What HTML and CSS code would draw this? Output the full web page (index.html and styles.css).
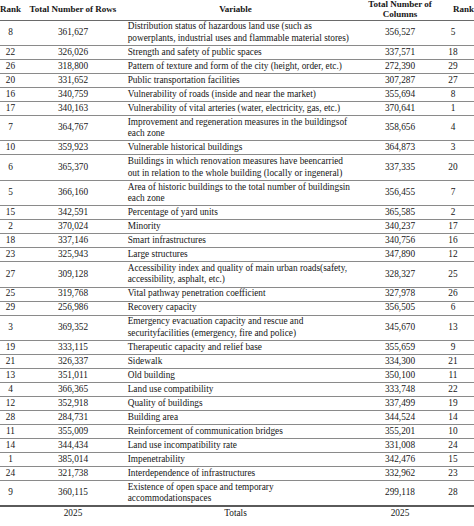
FILE: index.html
```html
<!DOCTYPE html>
<html>
<head>
<meta charset="utf-8">
<link rel="stylesheet" href="styles.css">
</head>
<body>
<table class="tbl">
  <colgroup>
    <col class="c-rank">
    <col class="c-rows">
    <col class="c-var">
    <col class="c-cols">
    <col class="c-rank2">
  </colgroup>
  <thead>
    <tr>
      <th class="num">Rank</th>
      <th class="num">Total Number of Rows</th>
      <th class="var-h">Variable</th>
      <th class="num">Total Number of<br>Columns</th>
      <th class="rank2-h">Rank</th>
    </tr>
  </thead>
  <tbody>
    <tr><td class="num">8</td><td class="num">361,627</td><td class="var">Distribution status of hazardous land use (such as<br>powerplants, industrial uses and flammable material stores)</td><td class="num">356,527</td><td class="rank2">5</td></tr>
    <tr><td class="num">22</td><td class="num">326,026</td><td class="var">Strength and safety of public spaces</td><td class="num">337,571</td><td class="rank2">18</td></tr>
    <tr><td class="num">26</td><td class="num">318,800</td><td class="var">Pattern of texture and form of the city (height, order, etc.)</td><td class="num">272,390</td><td class="rank2">29</td></tr>
    <tr><td class="num">20</td><td class="num">331,652</td><td class="var">Public transportation facilities</td><td class="num">307,287</td><td class="rank2">27</td></tr>
    <tr><td class="num">16</td><td class="num">340,759</td><td class="var">Vulnerability of roads (inside and near the market)</td><td class="num">355,694</td><td class="rank2">8</td></tr>
    <tr><td class="num">17</td><td class="num">340,163</td><td class="var">Vulnerability of vital arteries (water, electricity, gas, etc.)</td><td class="num">370,641</td><td class="rank2">1</td></tr>
    <tr><td class="num">7</td><td class="num">364,767</td><td class="var">Improvement and regeneration measures in the buildingsof<br>each zone</td><td class="num">358,656</td><td class="rank2">4</td></tr>
    <tr><td class="num">10</td><td class="num">359,923</td><td class="var">Vulnerable historical buildings</td><td class="num">364,873</td><td class="rank2">3</td></tr>
    <tr><td class="num">6</td><td class="num">365,370</td><td class="var">Buildings in which renovation measures have beencarried<br>out in relation to the whole building (locally or ingeneral)</td><td class="num">337,335</td><td class="rank2">20</td></tr>
    <tr><td class="num">5</td><td class="num">366,160</td><td class="var">Area of historic buildings to the total number of buildingsin<br>each zone</td><td class="num">356,455</td><td class="rank2">7</td></tr>
    <tr><td class="num">15</td><td class="num">342,591</td><td class="var">Percentage of yard units</td><td class="num">365,585</td><td class="rank2">2</td></tr>
    <tr><td class="num">2</td><td class="num">370,024</td><td class="var">Minority</td><td class="num">340,237</td><td class="rank2">17</td></tr>
    <tr><td class="num">18</td><td class="num">337,146</td><td class="var">Smart infrastructures</td><td class="num">340,756</td><td class="rank2">16</td></tr>
    <tr><td class="num">23</td><td class="num">325,943</td><td class="var">Large structures</td><td class="num">347,890</td><td class="rank2">12</td></tr>
    <tr><td class="num">27</td><td class="num">309,128</td><td class="var">Accessibility index and quality of main urban roads(safety,<br>accessibility, asphalt, etc.)</td><td class="num">328,327</td><td class="rank2">25</td></tr>
    <tr><td class="num">25</td><td class="num">319,768</td><td class="var">Vital pathway penetration coefficient</td><td class="num">327,978</td><td class="rank2">26</td></tr>
    <tr><td class="num">29</td><td class="num">256,986</td><td class="var">Recovery capacity</td><td class="num">356,505</td><td class="rank2">6</td></tr>
    <tr><td class="num">3</td><td class="num">369,352</td><td class="var">Emergency evacuation capacity and rescue and<br>securityfacilities (emergency, fire and police)</td><td class="num">345,670</td><td class="rank2">13</td></tr>
    <tr><td class="num">19</td><td class="num">333,115</td><td class="var">Therapeutic capacity and relief base</td><td class="num">355,659</td><td class="rank2">9</td></tr>
    <tr><td class="num">21</td><td class="num">326,337</td><td class="var">Sidewalk</td><td class="num">334,300</td><td class="rank2">21</td></tr>
    <tr><td class="num">13</td><td class="num">351,011</td><td class="var">Old building</td><td class="num">350,100</td><td class="rank2">11</td></tr>
    <tr><td class="num">4</td><td class="num">366,365</td><td class="var">Land use compatibility</td><td class="num">333,748</td><td class="rank2">22</td></tr>
    <tr><td class="num">12</td><td class="num">352,918</td><td class="var">Quality of buildings</td><td class="num">337,499</td><td class="rank2">19</td></tr>
    <tr><td class="num">28</td><td class="num">284,731</td><td class="var">Building area</td><td class="num">344,524</td><td class="rank2">14</td></tr>
    <tr><td class="num">11</td><td class="num">355,009</td><td class="var">Reinforcement of communication bridges</td><td class="num">355,201</td><td class="rank2">10</td></tr>
    <tr><td class="num">14</td><td class="num">344,434</td><td class="var">Land use incompatibility rate</td><td class="num">331,008</td><td class="rank2">24</td></tr>
    <tr><td class="num">1</td><td class="num">385,014</td><td class="var">Impenetrability</td><td class="num">342,476</td><td class="rank2">15</td></tr>
    <tr><td class="num">24</td><td class="num">321,738</td><td class="var">Interdependence of infrastructures</td><td class="num">332,962</td><td class="rank2">23</td></tr>
    <tr class="last"><td class="num">9</td><td class="num">360,115</td><td class="var">Existence of open space and temporary<br>accommodationspaces</td><td class="num">299,118</td><td class="rank2">28</td></tr>
  </tbody>
  <tfoot>
    <tr><td class="num"></td><td class="num">2025</td><td class="var-h">Totals</td><td class="num">2025</td><td class="rank2"></td></tr>
  </tfoot>
</table>
</body>
</html>
```

FILE: styles.css
```css
html, body {
  margin: 0;
  padding: 0;
  background: #ffffff;
  overflow: hidden;
}

.tbl {
  margin-top: -1.5px;
  margin-left: -3px;
  width: 477px;
  table-layout: fixed;
  border-collapse: separate;
  border-spacing: 0;
  font-family: "Liberation Serif", "Times New Roman", serif;
  font-size: 9.3px;
  color: #161616;
}

.c-rank { width: 27px; }
.c-rows { width: 98px; }
.c-var { width: 236px; }
.c-cols { width: 84px; }
.c-rank2 { width: 32px; }

.tbl th {
  font-weight: bold;
  font-size: 9px;
  line-height: 10px;
  padding: 0 0 1px 0;
  border-bottom: 1.5px solid #6a6a6a;
  vertical-align: middle;
  white-space: nowrap;
}

.tbl td {
  line-height: 11.4px;
  padding: 0.8px 0;
  border-bottom: 1.2px solid #8a8a8a;
  vertical-align: middle;
  white-space: nowrap;
}

.tbl .num { text-align: center; }

.tbl .var {
  text-align: left;
  padding-left: 5.7px;
}

.tbl .var-h {
  text-align: center;
  padding-right: 9px;
}

.tbl .rank2 {
  text-align: center;
  padding-right: 10px;
}

.tbl .rank2-h {
  text-align: left;
  padding-left: 11px;
}

.tbl tr.last td {
  border-bottom: 2px solid #5a5a5a;
}

.tbl tfoot td {
  border-bottom: none;
  padding-top: 0.5px;
}
```
